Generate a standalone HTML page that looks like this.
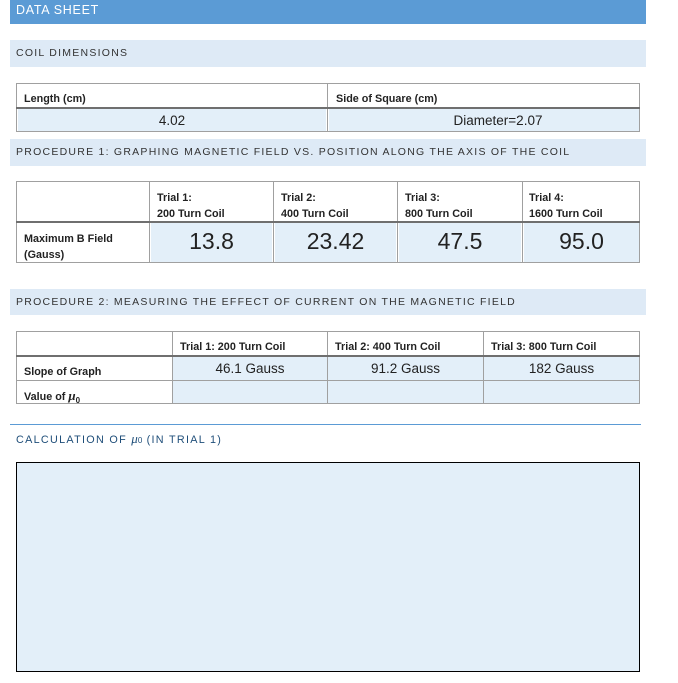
<!DOCTYPE html>
<html><head><meta charset="utf-8"><style>
*{margin:0;padding:0;box-sizing:border-box}
body{width:678px;height:683px;background:#fff;position:relative;font-family:"Liberation Sans",sans-serif;color:#222;overflow:hidden}
.a{position:absolute}
.bar{position:absolute;left:10px;width:636px;background:#deeaf6;font-size:10.5px;letter-spacing:1.25px;color:#333;padding-left:6px}
.c{position:absolute;border:1px solid #a0a0a0;font-size:10px;font-weight:bold}
.f{background:#e3eff9}
.t{position:absolute;background:#6f6f6f;height:2px}
.b{position:absolute;font-size:10.8px;font-weight:bold}
</style></head><body>
<div class="a" style="left:10px;top:0;width:636px;height:24px;background:#5b9bd5;color:#fff;font-size:12.5px;letter-spacing:0.7px;padding:3px 0 0 6px">DATA SHEET</div>

<div class="bar" style="top:40px;height:27px;line-height:27px">COIL DIMENSIONS</div>
<div class="c" style="left:16px;top:83px;width:312px;height:49px"></div>
<div class="c" style="left:327px;top:83px;width:313px;height:49px"></div>
<div class="b" style="left:24px;top:93px">Length (cm)</div>
<div class="b" style="left:336px;top:93px">Side of Square (cm)</div>
<div class="t" style="left:16px;top:107px;width:624px"></div>
<div class="a f" style="left:18px;top:109px;width:308px;height:22px"></div>
<div class="a f" style="left:329px;top:109px;width:310px;height:22px"></div>
<div class="a" style="left:18px;top:113px;width:308px;text-align:center;font-size:13.5px">4.02</div>
<div class="a" style="left:329px;top:113px;width:310px;text-align:center;font-size:13.5px;padding-left:28px">Diameter=2.07</div>

<div class="bar" style="top:139px;height:27px;line-height:27px">PROCEDURE 1: GRAPHING MAGNETIC FIELD VS. POSITION ALONG THE AXIS OF THE COIL</div>
<div class="c" style="left:16px;top:181px;width:624px;height:82px"></div>
<div class="a" style="left:149px;top:181px;width:1px;height:82px;background:#a0a0a0"></div>
<div class="a" style="left:273px;top:181px;width:1px;height:82px;background:#a0a0a0"></div>
<div class="a" style="left:397px;top:181px;width:1px;height:82px;background:#a0a0a0"></div>
<div class="a" style="left:522px;top:181px;width:1px;height:82px;background:#a0a0a0"></div>
<div class="t" style="left:16px;top:221px;width:624px"></div>
<div class="a f" style="left:151px;top:223px;width:121px;height:39px"></div>
<div class="a f" style="left:275px;top:223px;width:121px;height:39px"></div>
<div class="a f" style="left:399px;top:223px;width:122px;height:39px"></div>
<div class="a f" style="left:524px;top:223px;width:115px;height:39px"></div>
<div class="b" style="left:157px;top:190px;line-height:16px">Trial 1:<br>200 Turn Coil</div>
<div class="b" style="left:281px;top:190px;line-height:16px">Trial 2:<br>400 Turn Coil</div>
<div class="b" style="left:405px;top:190px;line-height:16px">Trial 3:<br>800 Turn Coil</div>
<div class="b" style="left:529px;top:190px;line-height:16px">Trial 4:<br>1600 Turn Coil</div>
<div class="b" style="left:24px;top:231px;line-height:16px">Maximum B Field<br>(Gauss)</div>
<div class="a" style="left:151px;top:228px;width:121px;text-align:center;font-size:23px">13.8</div>
<div class="a" style="left:275px;top:228px;width:121px;text-align:center;font-size:23px">23.42</div>
<div class="a" style="left:399px;top:228px;width:122px;text-align:center;font-size:23px">47.5</div>
<div class="a" style="left:524px;top:228px;width:115px;text-align:center;font-size:23px">95.0</div>

<div class="bar" style="top:289px;height:26px;line-height:26px">PROCEDURE 2: MEASURING THE EFFECT OF CURRENT ON THE MAGNETIC FIELD</div>
<div class="c" style="left:16px;top:331px;width:624px;height:73px"></div>
<div class="a f" style="left:173px;top:357px;width:466px;height:46px"></div>
<div class="a" style="left:172px;top:331px;width:1px;height:73px;background:#a0a0a0"></div>
<div class="a" style="left:327px;top:331px;width:1px;height:73px;background:#a0a0a0"></div>
<div class="a" style="left:483px;top:331px;width:1px;height:73px;background:#a0a0a0"></div>
<div class="a" style="left:16px;top:380px;width:624px;height:1px;background:#a0a0a0"></div>
<div class="t" style="left:16px;top:355px;width:624px"></div>
<div class="b" style="left:180px;top:341px">Trial 1: 200 Turn Coil</div>
<div class="b" style="left:335px;top:341px">Trial 2: 400 Turn Coil</div>
<div class="b" style="left:491px;top:341px">Trial 3: 800 Turn Coil</div>
<div class="b" style="left:24px;top:366px">Slope of Graph</div>
<div class="b" style="left:24px;top:388px">Value of <i style="font-family:'Liberation Serif',serif;font-size:13px">μ</i><sub style="font-size:8px">0</sub></div>
<div class="a" style="left:173px;top:361px;width:154px;text-align:center;font-size:13.5px">46.1 Gauss</div>
<div class="a" style="left:328px;top:361px;width:155px;text-align:center;font-size:13.5px">91.2 Gauss</div>
<div class="a" style="left:484px;top:361px;width:155px;text-align:center;font-size:13.5px">182 Gauss</div>

<div class="a" style="left:10px;top:424px;width:631px;height:1px;background:#5b9bd5"></div>
<div class="a" style="left:16px;top:431px;font-size:10.8px;letter-spacing:1.3px;color:#1f4e79">CALCULATION OF <i style="font-family:'Liberation Serif',serif;letter-spacing:0;font-size:13px">μ</i><span style="font-size:8px;letter-spacing:0">0</span> (IN TRIAL 1)</div>
<div class="a" style="left:16px;top:462px;width:624px;height:210px;border:1px solid #000;background:#e3eff9"></div>
</body></html>
